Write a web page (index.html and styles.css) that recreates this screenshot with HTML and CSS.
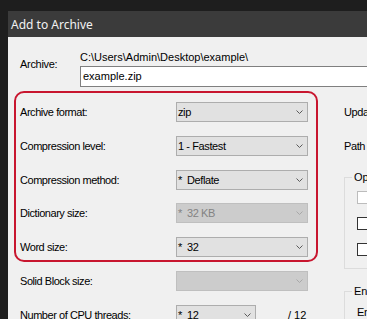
FILE: index.html
```html
<!DOCTYPE html>
<html>
<head>
<meta charset="utf-8">
<link rel="stylesheet" href="styles.css">
</head>
<body>
<div class="window">
  <div class="titlebar">Add to Archive</div>
  <div class="client">
    <div class="archive">
      <div class="archive-label">Archive:</div>
      <div class="archive-fields">
        <div class="path">C:\Users\Admin\Desktop\example\</div>
        <div class="input">example.zip</div>
      </div>
    </div>
    <div class="main">
      <div class="left">
        <div class="highlight">
          <div class="row">
            <div class="label">Archive format:</div>
            <div class="combo"><span class="val">zip</span><svg class="chev" width="7" height="4" viewBox="0 0 7 4"><polyline points="0.5,0.5 3.5,3.5 6.5,0.5"/></svg></div>
          </div>
          <div class="row">
            <div class="label">Compression level:</div>
            <div class="combo"><span class="val">1 - Fastest</span><svg class="chev" width="7" height="4" viewBox="0 0 7 4"><polyline points="0.5,0.5 3.5,3.5 6.5,0.5"/></svg></div>
          </div>
          <div class="row">
            <div class="label">Compression method:</div>
            <div class="combo"><span class="val"><span class="star">*</span>Deflate</span><svg class="chev" width="7" height="4" viewBox="0 0 7 4"><polyline points="0.5,0.5 3.5,3.5 6.5,0.5"/></svg></div>
          </div>
          <div class="row">
            <div class="label">Dictionary size:</div>
            <div class="combo disabled"><span class="val"><span class="star">*</span>32 KB</span><svg class="chev" width="7" height="4" viewBox="0 0 7 4"><polyline points="0.5,0.5 3.5,3.5 6.5,0.5"/></svg></div>
          </div>
          <div class="row">
            <div class="label">Word size:</div>
            <div class="combo"><span class="val"><span class="star">*</span>32</span><svg class="chev" width="7" height="4" viewBox="0 0 7 4"><polyline points="0.5,0.5 3.5,3.5 6.5,0.5"/></svg></div>
          </div>
        </div>
        <div class="plain">
          <div class="row">
            <div class="label">Solid Block size:</div>
            <div class="combo disabled"><span class="val"></span><svg class="chev" width="7" height="4" viewBox="0 0 7 4"><polyline points="0.5,0.5 3.5,3.5 6.5,0.5"/></svg></div>
          </div>
          <div class="row">
            <div class="label">Number of CPU threads:</div>
            <div class="combo short"><span class="val"><span class="star">*</span>12</span><svg class="chev" width="7" height="4" viewBox="0 0 7 4"><polyline points="0.5,0.5 3.5,3.5 6.5,0.5"/></svg></div>
            <div class="of">/ 12</div>
          </div>
        </div>
      </div>
      <div class="right">
        <div class="line first">Update mode:</div>
        <div class="line second">Path mode:</div>
        <fieldset class="group g1">
          <legend>Options</legend>
          <div class="checks">
            <div class="check dim"></div>
            <div class="check"></div>
            <div class="check"></div>
          </div>
        </fieldset>
        <fieldset class="group g2">
          <legend>Encryption</legend>
          <div class="inner">Enter password:</div>
        </fieldset>
      </div>
    </div>
  </div>
</div>
</body>
</html>
```
FILE: styles.css
```css
html, body {
  margin: 0;
  padding: 0;
}
body {
  width: 367px;
  height: 319px;
  overflow: hidden;
  background: #1e1e1e;
  font-family: "Liberation Sans", Arial, sans-serif;
  font-size: 11px;
  color: #000;
}
.window {
  margin: 11px 0 0 8px;
  width: 400px;
}
.titlebar {
  height: 26px;
  background: #3b3b3b;
  color: #f2f2f2;
  font-family: "Noto Sans", "Open Sans", sans-serif;
  font-size: 12px;
  display: flex;
  align-items: center;
  padding-left: 3px;
}
.client {
  background: #f0f0f0;
  height: 300px;
}
.archive {
  display: flex;
  padding: 13px 0 0 12px;
}
.archive-label {
  width: 60px;
  line-height: 14px;
  margin-top: 7px;
  letter-spacing: -0.3px;
}
.archive-fields {
  flex: 1;
}
.path {
  line-height: 14px;
}
.input {
  margin-top: 2px;
  height: 21px;
  box-sizing: border-box;
  border: 1px solid #7f7f7f;
  border-right: none;
  background: #fff;
  padding-left: 2px;
  line-height: 19px;
}
.main {
  display: flex;
}
.left {
  margin-left: 6px;
  width: 304px;
}
.highlight {
  margin-top: 4px;
  border: 2px solid #c8162f;
  border-radius: 10px;
  padding: 9px 8px 3px 4px;
  display: flex;
  flex-direction: column;
  gap: 13.75px;
}
.row {
  display: flex;
  align-items: center;
  height: 20px;
}
.label {
  width: 156px;
  line-height: 14px;
  letter-spacing: -0.45px;
  white-space: nowrap;
}
.combo {
  width: 132px;
  height: 20px;
  box-sizing: border-box;
  border: 1px solid #adadad;
  background: #e1e1e1;
  display: flex;
  align-items: center;
  padding-left: 1px;
}
.combo .val {
  flex: 1;
  white-space: nowrap;
  letter-spacing: -0.4px;
}
.star {
  display: inline-block;
  width: 9px;
}
.chev {
  margin-right: 4px;
  fill: none;
  stroke: #5a5a5a;
  stroke-width: 1;
}
.combo.disabled {
  background: #cccccc;
  border-color: #bfbfbf;
  color: #838383;
}
.combo.disabled .chev {
  stroke: #a8a8a8;
}
.combo.short {
  width: 80px;
}
.of {
  margin-left: 32px;
}
.plain {
  margin-top: 9px;
  padding-left: 6px;
  display: flex;
  flex-direction: column;
  gap: 14px;
}
.right {
  margin-left: 26px;
  width: 120px;
  display: flex;
  flex-direction: column;
  letter-spacing: -0.4px;
}
.line {
  line-height: 14px;
  white-space: nowrap;
}
.line.first {
  margin-top: 17.5px;
}
.line.second {
  margin-top: 20.5px;
}
.group {
  margin: 0;
  padding: 0 0 12px 7px;
  border: 1px solid #dcdcdc;
  width: 110px;
}
.group legend {
  padding: 0 2px;
  line-height: 14px;
  white-space: nowrap;
  letter-spacing: 0;
}
.g1 {
  margin-top: 17px;
}
.checks {
  margin: 7px 0 0 5px;
  display: flex;
  flex-direction: column;
  gap: 13px;
}
.check {
  width: 13px;
  height: 13px;
  box-sizing: border-box;
  border: 1px solid #333;
  background: #fff;
}
.check.dim {
  border-color: #bcbcbc;
}
.g2 {
  margin-top: 15px;
}
.inner {
  margin: 7px 0 0 5px;
  line-height: 14px;
  white-space: nowrap;
}
```
